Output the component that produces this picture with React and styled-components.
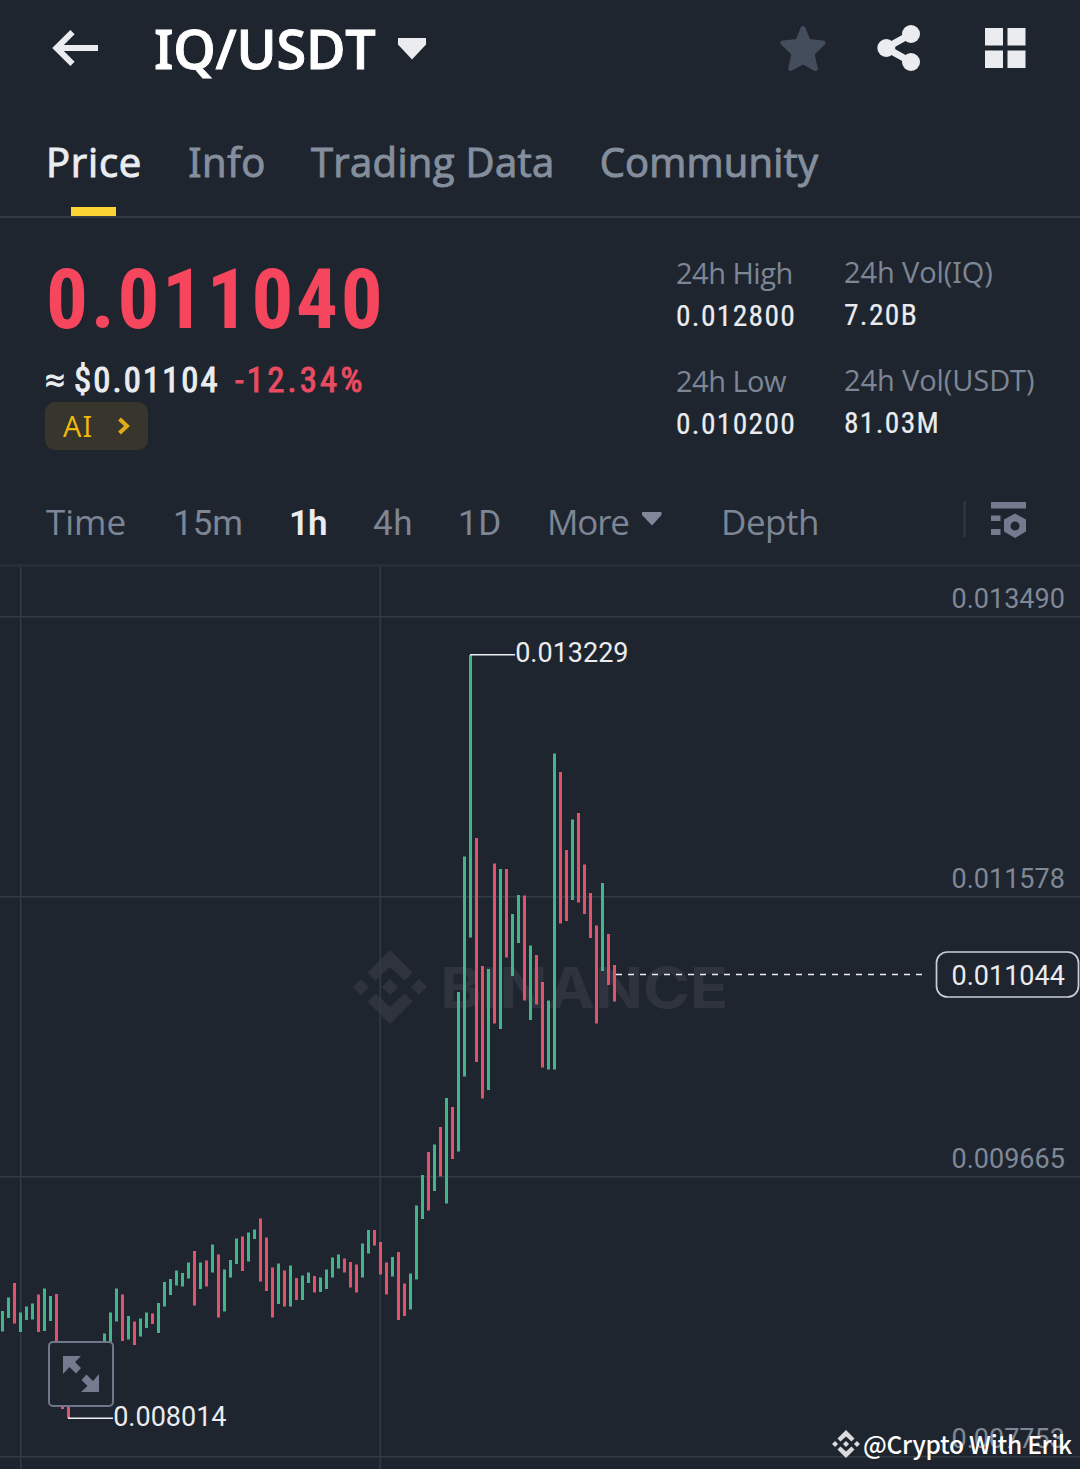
import styled, { createGlobalStyle } from "styled-components";

const GlobalStyle = createGlobalStyle`
  body {
    margin: 0;
    background: #1f252f;
  }
  * {
    box-sizing: border-box;
  }
`;

const sans = `"Open Sans", "Noto Sans", sans-serif`;
const digits = `"Roboto Condensed", Roboto, sans-serif`;

const Container = styled.div`
  width: 1080px;
  height: 1469px;
  overflow: hidden;
  background: #1f252f;
  color: #eaecef;
  font-family: ${sans};
`;

const Header = styled.header`
  display: flex;
  align-items: center;
  height: 96px;
  padding: 0 54px 0 52px;
`;

const Pair = styled.h1`
  width: 229px;
  margin: 0 0 0 56px;
  font-size: 54px;
  font-weight: 600;
  line-height: 96px;
  color: #fff;
  white-space: nowrap;
  letter-spacing: -0.2px;
  -webkit-text-stroke: 0.9px currentColor;
  font-feature-settings: "ss01", "ss02", "ss03";
`;

const Caret = styled.svg`
  margin-left: 15px;
  margin-top: 1px;
`;

const Actions = styled.div`
  display: flex;
  align-items: center;
  gap: ${(p) => p.$gap || 0}px;
  margin-left: auto;
`;

const Tabs = styled.nav`
  display: flex;
  gap: 45px;
  height: 122px;
  padding: 35px 45px 0;
  border-bottom: 2px solid #333b47;
`;

const Tab = styled.div`
  display: flex;
  flex-direction: column;
  align-items: center;
  font-size: 40px;
  font-weight: 500;
  line-height: 61px;
  white-space: nowrap;
  color: ${(p) => (p.$active ? "#eaecef" : "#848e9c")};
  letter-spacing: ${(p) => p.$spacing || 0}px;
  -webkit-text-stroke: 1px currentColor;
  font-feature-settings: ${(p) => (p.$serif ? '"ss01", "ss02", "ss03"' : "normal")};
`;

const TabText = styled.span`
  padding-left: 1px;
`;

const Underline = styled.div`
  width: 45px;
  height: 9px;
  margin-top: auto;
  background: #fcd535;
`;

const Summary = styled.section`
  display: grid;
  grid-template-columns: 631px 168px 1fr;
  height: 257px;
  padding-left: 45px;
`;

const PriceBox = styled.div`
  padding-top: 38px;
`;

const LastPrice = styled.div`
  height: 88px;
  line-height: 88px;
  padding-left: 1px;
  font-family: ${digits};
  font-size: 83px;
  font-weight: 700;
  letter-spacing: 2.7px;
  color: #f6465d;
`;

const Converted = styled.div`
  display: grid;
  grid-template-columns: 29px 161px auto;
  height: 44px;
  margin-top: 14px;
  line-height: 44px;
  font-family: ${digits};
  font-size: 34.7px;
  font-weight: 400;
  letter-spacing: 2.1px;
  white-space: nowrap;
  -webkit-text-stroke: 1px currentColor;
`;

const Approx = styled.span`
  font-family: ${sans};
`;

const Change = styled.span`
  color: #e94b61;
  letter-spacing: 3.2px;
`;

const Tag = styled.div`
  display: flex;
  align-items: center;
  justify-content: space-between;
  width: 103px;
  height: 48px;
  padding: 0 18px;
  border-radius: 10px;
  background: #37352c;
  color: #f0b90b;
  font-size: 29px;
  line-height: 46px;
  letter-spacing: 1.2px;
  font-feature-settings: "ss01", "ss02", "ss03";
`;

const Stats = styled.div`
  padding-top: ${(p) => p.$top}px;
`;

const StatLabel = styled.div`
  height: 42px;
  line-height: 42px;
  font-size: 29px;
  color: #7d8694;
  white-space: nowrap;
  letter-spacing: ${(p) => p.$spacing || 0}px;
  font-feature-settings: ${(p) => (p.$serif ? '"ss01", "ss02", "ss03"' : "normal")};
`;

const StatValue = styled.div`
  height: 44px;
  line-height: 44px;
  margin-bottom: 22px;
  font-family: ${digits};
  font-size: 29.5px;
  font-weight: 400;
  letter-spacing: 1.3px;
  -webkit-text-stroke: 0.2px currentColor;
`;

const Intervals = styled.div`
  display: grid;
  grid-template-columns: 128px 116px 84px 85px 88px 96px 78px 243px 28px 36px;
  align-items: center;
  height: 92px;
  padding-left: 45px;
  border-bottom: 3px solid #272d38;
`;

const Interval = styled.div`
  font-family: ${(p) => (p.$word ? sans : "Roboto, sans-serif")};
  font-size: 35px;
  line-height: 50px;
  padding-top: ${(p) => (p.$word ? 4 : 8)}px;
  padding-left: ${(p) => (p.$word ? 1 : 0)}px;
  letter-spacing: ${(p) => p.$spacing || 0}px;
  font-weight: ${(p) => (p.$active ? 600 : 400)};
  color: ${(p) => (p.$active ? "#eaecef" : "#7d8694")};
`;

const MoreCaret = styled.svg`
  margin-top: -2px;
`;

const Divider = styled.div`
  width: 3px;
  height: 36px;
  margin-top: -2px;
  background: #2c333f;
`;

const ChartArea = styled.section`
  position: relative;
  height: 902px;
`;

const Chart = styled.svg`
  display: block;
`;

const FullscreenButton = styled.div`
  position: absolute;
  left: 48px;
  top: 774px;
  width: 66px;
  height: 66px;
  padding: 13px;
  border: 2px solid #6f778a;
  border-radius: 5px;
  background: #1f252f;
`;

const Credit = styled.div`
  position: absolute;
  left: 832px;
  top: 859px;
  display: flex;
  align-items: center;
  gap: 3px;
  height: 36px;
  color: #fff;
  font-family: "Noto Sans CJK SC", sans-serif;
  font-size: 24.5px;
  font-weight: 500;
  letter-spacing: -0.27px;
  line-height: 36px;
  white-space: nowrap;
`;

const GREEN = "#42b58a";
const RED = "#e2526b";

// [up, top, bottom], one bar every 6px starting at x = 1
const candles = [
  [1, 1311, 1331.5], [1, 1297.5, 1318], [0, 1283, 1323.5], [1, 1312.5, 1332],
  [1, 1306.5, 1320], [1, 1303.5, 1319.5], [0, 1294.5, 1332], [1, 1288.5, 1331],
  [1, 1296, 1321], [0, 1294, 1350], [0, 1345, 1409], [0, 1380, 1418],
  [1, 1370, 1400], [0, 1365, 1390], [1, 1360, 1385], [1, 1352, 1380],
  [1, 1345, 1370], [1, 1333.5, 1360], [1, 1312.5, 1350], [1, 1288.5, 1321.5],
  [0, 1294.5, 1341], [1, 1316, 1339.5], [0, 1321.5, 1345], [1, 1318.5, 1336.5],
  [1, 1312.5, 1328], [0, 1313.5, 1324], [1, 1303, 1333], [1, 1282, 1306.5],
  [1, 1279, 1295], [1, 1270.5, 1285.5], [1, 1273, 1286.5], [1, 1262.5, 1278.5],
  [0, 1251, 1305.5], [1, 1262.5, 1289], [0, 1260.5, 1286.5], [1, 1244.5, 1272.5],
  [0, 1254.5, 1317.5], [1, 1269.5, 1311.5], [1, 1260, 1277.5], [1, 1238.5, 1264],
  [0, 1236.5, 1271], [1, 1232.5, 1261.5], [1, 1229.5, 1239], [0, 1218.5, 1281.5],
  [0, 1237.5, 1291], [0, 1267.5, 1317.5], [1, 1263.5, 1304], [0, 1270.5, 1306.5],
  [1, 1265.5, 1306.5], [0, 1278, 1300], [1, 1275.5, 1300], [1, 1272.5, 1283],
  [0, 1276, 1292.5], [1, 1277.5, 1292], [1, 1269.5, 1289], [1, 1257.5, 1277.5],
  [1, 1254.5, 1268.5], [0, 1258.5, 1272.5], [0, 1262, 1287.5], [0, 1264.5, 1292.5],
  [1, 1243.5, 1277.5], [1, 1230, 1253.5], [0, 1230, 1245.5], [0, 1242, 1274.5],
  [0, 1262.5, 1294.5], [1, 1257, 1276.5], [0, 1252, 1320], [0, 1283.5, 1316],
  [1, 1273.5, 1309.5], [1, 1205.5, 1279.5], [1, 1175, 1219], [0, 1152, 1210.5],
  [1, 1144.5, 1191], [0, 1127, 1176.5], [1, 1098, 1203.5], [0, 1107, 1159],
  [1, 992, 1151.5], [1, 856.5, 1076.5], [1, 655, 937.5], [0, 838, 1062],
  [0, 966, 1098.5], [1, 969, 1090], [0, 863.5, 1023.5], [1, 869, 1029],
  [0, 869, 957.5], [1, 914, 976], [1, 895, 943], [0, 895.5, 1000.5],
  [1, 945.5, 1020], [0, 955, 1004.5], [0, 982, 1067.5], [1, 1000.5, 1069.5],
  [1, 753.5, 1069.5], [0, 772, 923.5], [0, 850, 921], [1, 819.5, 900],
  [0, 813, 902.5], [0, 864.5, 914], [0, 893, 938], [0, 925.5, 1023.5],
  [1, 883, 971], [0, 934, 985], [0, 965, 1001.5],
];

const gridLines = [
  { y: 616, label: "0.013490" },
  { y: 896, label: "0.011578" },
  { y: 1176, label: "0.009665" },
  { y: 1456, label: "0.007753" },
];

// Diamond logo on a 74x74 box
const Logo = ({ fill, ...rest }) => (
  <svg viewBox="0 0 74 74" fill={fill} {...rest}>
    <path d="M37 0 59.5 22.5 51.5 30.5 37 17 22.5 30.5 14.5 22.5Z" />
    <path d="M37 74 59.5 51.5 51.5 43.5 37 57 22.5 43.5 14.5 51.5Z" />
    <path d="M8 29 16 37 8 45 0 37ZM66 29 74 37 66 45 58 37ZM37 29 45 37 37 45 29 37Z" />
  </svg>
);

const TopBar = () => (
  <Header>
    <svg width="46" height="36" viewBox="0 0 46 36" fill="none" stroke="#eaecef" strokeWidth="6">
      <path d="M20.5 2.2 4.5 18 20.5 33.8M5 18H46" />
    </svg>
    <Pair>IQ/USDT</Pair>
    <Caret width="28" height="22" viewBox="0 0 28 22" fill="#eaecef">
      <path d="M0 0H28V6.500L14 21.500 0 6.500Z" />
    </Caret>
    <Actions $gap={64}>
      <Actions $gap={51}>
        <svg width="46" height="48" viewBox="0 0 46 48" fill="#434d5c" stroke="#434d5c" strokeWidth="5" strokeLinejoin="round">
          <path d="M23 4.500 28.200 17.500 43 19 32 29.500 35.300 44.500 23 37.500 10.700 44.500 14 29.500 3 19 17.800 17.500Z" />
        </svg>
        <svg width="44" height="46" viewBox="0 0 44 46" fill="#eaecef">
          <path d="M34 9 9 23 34 37" fill="none" stroke="#eaecef" strokeWidth="7" />
          <circle cx="34" cy="9" r="9" />
          <circle cx="9.300" cy="23" r="9" />
          <circle cx="34" cy="37" r="9" />
        </svg>
      </Actions>
      <svg width="41" height="40" viewBox="0 0 41 40" fill="#eaecef">
        <path d="M0 0H18V17.500H0ZM22.500 0H40.500V17.500H22.500ZM0 22.500H18V40H0ZM22.500 22.500H40.500V40H22.500Z" />
      </svg>
    </Actions>
  </Header>
);

const PriceChart = () => (
  <ChartArea>
    <Chart width="1080" height="902" viewBox="0 567 1080 902" fontFamily="Roboto, sans-serif" fontSize="27">
      <Logo x="353" y="950" width="74" height="74" fill="#2f333d" />
      <text
        x="440"
        y="1008"
        fontFamily="Inter, sans-serif"
        fontWeight="700"
        fontSize="57"
        fill="#2f333d"
        textLength="288"
        lengthAdjust="spacingAndGlyphs"
      >
        BINANCE
      </text>
      <g fill="#323a45">
        <rect x="20" y="567" width="1.500" height="902" />
        <rect x="379.500" y="567" width="1.500" height="902" />
        {gridLines.map((line) => (
          <rect key={line.y} x="0" y={line.y} width="1080" height="1.500" />
        ))}
      </g>
      <g fill="#7f8896">
        {gridLines.map((line) => (
          <text key={line.y} x="951.500" y={line.y - 8}>
            {line.label}
          </text>
        ))}
      </g>
      {candles.map(([up, top, bottom], i) => (
        <rect key={i} x={1 + i * 6} y={top} width="3" height={bottom - top} fill={up ? GREEN : RED} />
      ))}
      <g fill="#eaecef">
        <rect x="470" y="654" width="45" height="1.500" />
        <text x="515.200" y="662">0.013229</text>
        <rect x="68" y="1417.500" width="45" height="1.500" />
        <text x="113.200" y="1426">0.008014</text>
      </g>
      <path d="M616 974.500H924" stroke="#eaecef" strokeWidth="1.500" strokeDasharray="6 6" />
      <rect x="936.500" y="952" width="142" height="45" rx="11" fill="#1f252f" stroke="#c9cdd8" strokeWidth="1.700" />
      <text x="951.500" y="985" fill="#eaecef">0.011044</text>
    </Chart>
    <FullscreenButton>
      <svg width="36" height="36" viewBox="0 0 36 36" fill="#747b8e">
        <path d="M0 0H18L12 6 18 12 13 17.500 6.500 11 0 18Z" />
        <path d="M36 36H18L24.500 30 18.500 24 23.500 18.500 30 25 36 18Z" />
      </svg>
    </FullscreenButton>
    <Credit>
      <Logo width="28" height="28" fill="#d9dadc" />
      @Crypto With Erik
    </Credit>
  </ChartArea>
);

const App = () => {
  return (
    <Container>
      <GlobalStyle />
      <TopBar />
      <Tabs>
        <Tab $active $spacing={0.8}>
          <TabText>Price</TabText>
          <Underline />
        </Tab>
        <Tab $serif $spacing={0.6}>
          <TabText>Info</TabText>
        </Tab>
        <Tab $spacing={0.35}>Trading Data</Tab>
        <Tab $spacing={0.2}>Community</Tab>
      </Tabs>
      <Summary>
        <PriceBox>
          <LastPrice>0.011040</LastPrice>
          <Converted>
            <Approx>≈</Approx>
            <span>$0.01104</span>
            <Change>-12.34%</Change>
          </Converted>
          <Tag>
            AI
            <svg width="12" height="18" viewBox="0 0 12 18" fill="none" stroke="#e0ab17" strokeWidth="4">
              <path d="M1.500 2 9 9 1.500 16" />
            </svg>
          </Tag>
        </PriceBox>
        <Stats $top={34}>
          <StatLabel $spacing={-0.5}>24h High</StatLabel>
          <StatValue>0.012800</StatValue>
          <StatLabel $spacing={-0.5}>24h Low</StatLabel>
          <StatValue>0.010200</StatValue>
        </Stats>
        <Stats $top={33}>
          <StatLabel $serif $spacing={-0.1}>24h Vol(IQ)</StatLabel>
          <StatValue>7.20B</StatValue>
          <StatLabel $spacing={-0.1}>24h Vol(USDT)</StatLabel>
          <StatValue>81.03M</StatValue>
        </Stats>
      </Summary>
      <Intervals>
        <Interval $word>Time</Interval>
        <Interval>15m</Interval>
        <Interval $active $spacing={-1}>1h</Interval>
        <Interval $spacing={0.5}>4h</Interval>
        <Interval $spacing={0.5}>1D</Interval>
        <Interval $word $spacing={-1.2}>More</Interval>
        <MoreCaret width="20" height="14" viewBox="0 0 20 14" fill="#7f8798">
          <path d="M0 0H19.500V3L10 13.500 0 3Z" />
        </MoreCaret>
        <Interval $word $spacing={-0.5}>Depth</Interval>
        <Divider />
        <svg width="36" height="37" viewBox="0 0 36 37" fill="#757b8e">
          <path d="M0 1H35V7.500H0ZM0 14.500H9.500V20H0ZM0 28H9.500V34H0Z" />
          <path
            fillRule="evenodd"
            d="M24 12.500 35 18.500V30.500L24 37 13 30.500V18.500ZM24 20.500A4.500 4.500 0 1 0 24 29.500A4.500 4.500 0 1 0 24 20.500Z"
          />
        </svg>
      </Intervals>
      <PriceChart />
    </Container>
  );
};

export default App;
